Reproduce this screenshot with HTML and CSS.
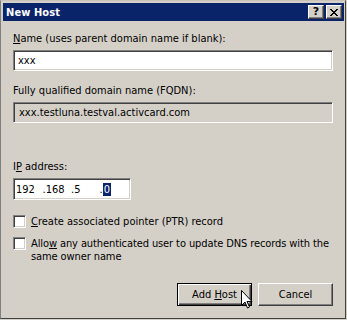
FILE: index.html
```html
<!DOCTYPE html>
<html>
<head>
<meta charset="utf-8">
<link rel="stylesheet" href="styles.css">
</head>
<body>
<div class="window">
  <div class="titlebar">
    <span class="title">New Host</span>
    <div class="tbtns">
      <span class="tbtn q">?</span>
      <span class="tbtn x"><svg width="8" height="7" viewBox="0 0 8 7"><path d="M0 0h2v1h1v1h2V1h1V0h2v1H7v1H6v1H5v1h1v1h1v1h1v1H6V6H5V5H3v1H2v1H0V6h1V5h1V4h1V3H2V2H1V1H0z" fill="#000"/></svg></span>
    </div>
  </div>
  <div class="content">
    <div class="label"><u>N</u>ame (uses parent domain name if blank):</div>
    <div class="edit">xxx</div>
    <div class="label gap1">Fully qualified domain name (FQDN):</div>
    <div class="edit ro">xxx.testluna.testval.activcard.com</div>
    <div class="label gap2">I<u>P</u> address:</div>
    <div class="edit ip"><span class="oct o1">192</span><span class="oct">.168</span><span class="oct">.5</span><span class="oct">.<span class="sel">0</span></span></div>
    <div class="check c1"><span class="box"></span><span class="ctext"><u>C</u>reate associated pointer (PTR) record</span></div>
    <div class="check c2"><span class="box"></span><span class="ctext nw">Allo<u>w</u> any authenticated user to update DNS records with the<br>same owner name</span></div>
    <div class="spacer"></div>
    <div class="buttons">
      <div class="btn def"><span class="inner">Add <u>H</u>ost</span></div>
      <div class="btn"><span class="inner">Cancel</span></div>
    </div>
  </div>
  <svg class="cursor" width="12" height="20" viewBox="0 0 12 20"><path d="M0.5 0.5v15l3.5-3.5 2.5 6 2-1-2.5-5.5h5z" fill="#fff" stroke="#000" stroke-width="1"/></svg>
</div>
</body>
</html>
```
FILE: styles.css
```css
html, body { margin: 0; padding: 0; background: #d4d0c8; }
body { width: 347px; height: 320px; overflow: hidden; position: relative; }
.window {
  box-sizing: border-box;
  width: 346px; height: 319px;
  background: #d4d0c8;
  border-left: 1px solid #808080;
  border-top: 1px solid #c8c4bc;
  border-right: 1px solid #404040;
  border-bottom: 1px solid #404040;
  padding: 2px 1px 0 2px;
  display: flex; flex-direction: column;
  font-family: "DejaVu Sans Condensed", "Liberation Sans", sans-serif;
  font-size: 11px;
  color: #000;
  position: relative;
}
.titlebar {
  height: 18px;
  background: #0a246a;
  display: flex; align-items: center; justify-content: space-between;
  padding: 0 2px 0 3px;
}
.title { color: #fff; font-weight: bold; font-size: 11px; letter-spacing: 0.1px; }
.tbtns { display: flex; gap: 2px; }
.tbtn {
  box-sizing: border-box;
  width: 16px; height: 14px;
  background: #d4d0c8;
  border-top: 1px solid #fff; border-left: 1px solid #fff;
  border-right: 1px solid #404040; border-bottom: 1px solid #404040;
  box-shadow: inset -1px -1px 0 #808080;
  display: flex; align-items: center; justify-content: center;
  font-weight: bold; font-size: 11px; line-height: 12px;
  font-family: "DejaVu Sans", sans-serif;
}
.content { flex: 1; display: flex; flex-direction: column; padding: 11px 11px 12px 10px; }
.label { line-height: 13px; height: 13px; margin-bottom: 5px; }
.gap1 { margin-top: 13px; }
.gap2 { margin-top: 37px; }
.edit {
  box-sizing: border-box;
  height: 21px;
  background: #fff;
  border-top: 1px solid #808080; border-left: 1px solid #808080;
  border-right: 1px solid #fff; border-bottom: 1px solid #fff;
  box-shadow: inset 1px 1px 0 #404040, inset -1px -1px 0 #d4d0c8;
  padding: 3px 4px;
  line-height: 13px;
}
.edit.ro { background: #d4d0c8; padding-left: 5px; }
.edit.ip { width: 118px; height: 22px; padding: 4px 2px 3px; display: flex; }
.oct { width: 29px; }
.o1 { width: 27px; }
.sel { background: #0a246a; color: #fff; padding: 0 1px; }
.check { display: flex; align-items: flex-start; }
.c1 { margin-top: 15px; }
.c2 { margin-top: 9px; }
.box {
  flex: none;
  box-sizing: border-box; width: 13px; height: 13px;
  background: #fff;
  border-top: 1px solid #808080; border-left: 1px solid #808080;
  border-right: 1px solid #fff; border-bottom: 1px solid #fff;
  box-shadow: inset 1px 1px 0 #404040, inset -1px -1px 0 #d4d0c8;
  margin-right: 5px;
}
.ctext { line-height: 13px; }
.nw { white-space: nowrap; letter-spacing: -0.1px; }
.spacer { flex: 1; }
.buttons { display: flex; justify-content: flex-end; gap: 6px; }
.btn {
  box-sizing: border-box; width: 75px; height: 23px;
  background: #d4d0c8;
  border-top: 1px solid #fff; border-left: 1px solid #fff;
  border-right: 1px solid #404040; border-bottom: 1px solid #404040;
  box-shadow: inset -1px -1px 0 #808080;
  display: flex; align-items: center; justify-content: center;
}
.btn.def { border: 1px solid #000; box-shadow: inset 1px 1px 0 #fff, inset -1px -1px 0 #404040, inset -2px -2px 0 #808080; }
.cursor { position: absolute; left: 240px; top: 289px; }
```
